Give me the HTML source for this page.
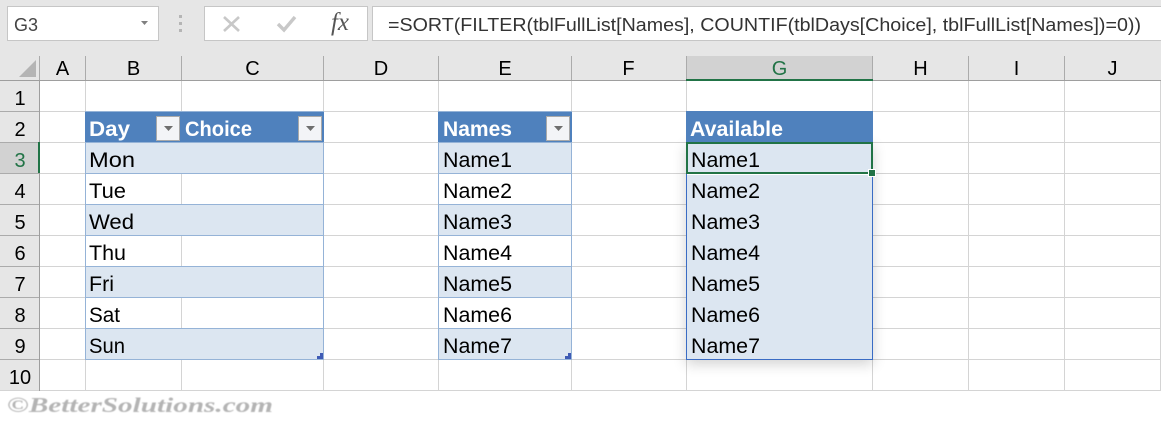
<!DOCTYPE html>
<html><head><meta charset="utf-8"><style>
html,body{margin:0;padding:0;background:#fff;width:1161px;height:425px;overflow:hidden}
svg{display:block}
text{font-family:"Liberation Sans",sans-serif}
.h{font-size:20px;fill:#000;text-anchor:middle}
.c{font-size:21px;fill:#000}
.w{font-size:21px;fill:#fff;font-weight:bold}
</style></head><body>
<svg width="1161" height="425" viewBox="0 0 1161 425" xmlns="http://www.w3.org/2000/svg" shape-rendering="crispEdges">
<defs><filter id="s" x="-20%" y="-20%" width="140%" height="140%"><feGaussianBlur stdDeviation="7"/></filter><filter id="b"><feGaussianBlur stdDeviation="0.6"/></filter></defs>
<rect width="1161" height="391" fill="#fff"/>
<rect width="1161" height="56" fill="#e6e6e6"/>
<rect x="0" y="56" width="1161" height="25" fill="#e6e6e6"/>
<rect x="0" y="56" width="39" height="335" fill="#e6e6e6"/>
<!-- formula bar -->
<rect x="7.5" y="6.5" width="151" height="34" fill="#fff" stroke="#c6c6c6"/>
<rect x="204.5" y="6.5" width="163" height="34" fill="#fff" stroke="#c6c6c6"/>
<rect x="372.5" y="6.5" width="790" height="34" fill="#fff" stroke="#c6c6c6"/>
<text x="14" y="31" style="font-size:18px" fill="#444">G3</text>
<path d="M141 21h7l-3.500 4z" fill="#808080" shape-rendering="auto"/>
<rect x="179" y="15" width="3" height="3" fill="#b5b5b5"/><rect x="179" y="22" width="3" height="3" fill="#b5b5b5"/><rect x="179" y="29" width="3" height="3" fill="#b5b5b5"/>
<path d="M224 17L239 31M239 17L224 31" stroke="#c8c8c8" stroke-width="2.600" fill="none" shape-rendering="auto"/>
<path d="M278 24L284 30L295 17" stroke="#c8c8c8" stroke-width="3.400" fill="none" shape-rendering="auto"/>
<text x="331" y="30" style="font-family:'Liberation Serif',serif;font-size:25px;font-style:italic" fill="#555" textLength="18" lengthAdjust="spacingAndGlyphs">fx</text>
<text x="388" y="31" style="font-size:18.500px" fill="#333" textLength="753" lengthAdjust="spacingAndGlyphs">=SORT(FILTER(tblFullList[Names], COUNTIF(tblDays[Choice], tblFullList[Names])=0))</text>
<!-- selected headers -->
<rect x="686" y="56" width="186" height="24" fill="#d2d2d2"/>
<rect x="0" y="142" width="39" height="31" fill="#d2d2d2"/>
<!-- corner -->
<path d="M19 77L36 60V77Z" fill="#b4b4b4" shape-rendering="auto"/>
<!-- grid -->
<g fill="#d4d4d4">
<rect x="40" y="111" width="1121" height="1"/><rect x="40" y="142" width="1121" height="1"/><rect x="40" y="173" width="1121" height="1"/><rect x="40" y="204" width="1121" height="1"/><rect x="40" y="235" width="1121" height="1"/><rect x="40" y="266" width="1121" height="1"/><rect x="40" y="297" width="1121" height="1"/><rect x="40" y="328" width="1121" height="1"/><rect x="40" y="359" width="1121" height="1"/><rect x="0" y="390" width="1161" height="1"/>
<rect x="85" y="81" width="1" height="310"/><rect x="181" y="81" width="1" height="310"/><rect x="323" y="81" width="1" height="310"/><rect x="438" y="81" width="1" height="310"/><rect x="571" y="81" width="1" height="310"/><rect x="686" y="81" width="1" height="310"/><rect x="872" y="81" width="1" height="310"/><rect x="968" y="81" width="1" height="310"/><rect x="1064" y="81" width="1" height="310"/><rect x="1160" y="81" width="1" height="310"/>
</g>
<!-- header separators -->
<g fill="#ababab">
<rect x="39" y="56" width="1" height="24"/><rect x="85" y="56" width="1" height="24"/><rect x="181" y="56" width="1" height="24"/><rect x="323" y="56" width="1" height="24"/><rect x="438" y="56" width="1" height="24"/><rect x="571" y="56" width="1" height="24"/><rect x="686" y="56" width="1" height="24"/><rect x="872" y="56" width="1" height="24"/><rect x="968" y="56" width="1" height="24"/><rect x="1064" y="56" width="1" height="24"/>
<rect x="0" y="111" width="39" height="1"/><rect x="0" y="142" width="39" height="1"/><rect x="0" y="173" width="39" height="1"/><rect x="0" y="204" width="39" height="1"/><rect x="0" y="235" width="39" height="1"/><rect x="0" y="266" width="39" height="1"/><rect x="0" y="297" width="39" height="1"/><rect x="0" y="328" width="39" height="1"/><rect x="0" y="359" width="39" height="1"/>
</g>
<rect x="0" y="80" width="1161" height="1" fill="#9e9e9e"/>
<rect x="39" y="81" width="1" height="310" fill="#9e9e9e"/>
<rect x="686" y="79" width="187" height="2" fill="#217346"/>
<rect x="38" y="142" width="2" height="31" fill="#217346"/>
<!-- column letters -->
<text class="h" x="62.500" y="75">A</text><text class="h" x="133.500" y="75">B</text><text class="h" x="252.500" y="75">C</text><text class="h" x="381" y="75">D</text><text class="h" x="505" y="75">E</text><text class="h" x="628.500" y="75">F</text><text class="h" x="779.500" y="75" style="fill:#217346">G</text><text class="h" x="920.500" y="75">H</text><text class="h" x="1016.500" y="75">I</text><text class="h" x="1112.500" y="75">J</text>
<!-- row numbers -->
<text class="h" x="20" y="105">1</text><text class="h" x="20" y="136">2</text><text class="h" x="20" y="167" style="fill:#217346">3</text><text class="h" x="20" y="198">4</text><text class="h" x="20" y="229">5</text><text class="h" x="20" y="260">6</text><text class="h" x="20" y="291">7</text><text class="h" x="20" y="322">8</text><text class="h" x="20" y="353">9</text><text class="h" x="20" y="384">10</text>
<!-- table 1 -->
<rect x="85" y="111" width="239" height="32" fill="#4f81bd"/>
<rect x="85" y="143" width="239" height="31" fill="#dce6f1"/>
<rect x="85" y="205" width="239" height="31" fill="#dce6f1"/>
<rect x="85" y="267" width="239" height="31" fill="#dce6f1"/>
<rect x="85" y="329" width="239" height="31" fill="#dce6f1"/>
<g fill="#95b3d7">
<rect x="85" y="142" width="239" height="1"/><rect x="85" y="173" width="239" height="1"/><rect x="85" y="204" width="239" height="1"/><rect x="85" y="235" width="239" height="1"/><rect x="85" y="266" width="239" height="1"/><rect x="85" y="297" width="239" height="1"/><rect x="85" y="328" width="239" height="1"/><rect x="85" y="359" width="239" height="1"/>
<rect x="85" y="143" width="1" height="217"/><rect x="323" y="143" width="1" height="217"/><rect x="85" y="111" width="239" height="1"/>
</g>
<rect x="181" y="174" width="1" height="30" fill="#d4d4d4"/><rect x="181" y="236" width="1" height="30" fill="#d4d4d4"/><rect x="181" y="298" width="1" height="30" fill="#d4d4d4"/>
<!-- table 2 -->
<rect x="438" y="111" width="134" height="32" fill="#4f81bd"/>
<rect x="438" y="143" width="134" height="31" fill="#dce6f1"/>
<rect x="438" y="205" width="134" height="31" fill="#dce6f1"/>
<rect x="438" y="267" width="134" height="31" fill="#dce6f1"/>
<rect x="438" y="329" width="134" height="31" fill="#dce6f1"/>
<g fill="#95b3d7">
<rect x="438" y="142" width="134" height="1"/><rect x="438" y="173" width="134" height="1"/><rect x="438" y="204" width="134" height="1"/><rect x="438" y="235" width="134" height="1"/><rect x="438" y="266" width="134" height="1"/><rect x="438" y="297" width="134" height="1"/><rect x="438" y="328" width="134" height="1"/><rect x="438" y="359" width="134" height="1"/>
<rect x="438" y="143" width="1" height="217"/><rect x="571" y="143" width="1" height="217"/><rect x="438" y="111" width="134" height="1"/>
</g>
<!-- resize handles -->
<path d="M317 359h6v-6h-3v3h-3z" fill="#3f5bb5"/>
<path d="M565 359h6v-6h-3v3h-3z" fill="#3f5bb5"/>
<!-- spill shadow -->
<rect x="686" y="146" width="187" height="218" fill="#000" opacity="0.18" filter="url(#s)" shape-rendering="auto"/>
<rect x="686" y="111" width="187" height="32" fill="#4f81bd"/>
<rect x="686.500" y="143.500" width="186" height="216" fill="#dce6f1" stroke="#3a6cc4"/>
<!-- active cell -->
<rect x="687" y="143" width="185" height="30" fill="#dce6f1" stroke="#217346" stroke-width="2"/>
<rect x="687" y="174" width="185" height="1" fill="#fff"/>
<rect x="868" y="169" width="8" height="8" fill="#fff"/>
<rect x="869" y="170" width="6" height="6" fill="#217346"/>
<!-- filter buttons -->
<g>
<rect x="156.500" y="116.500" width="23" height="24" fill="#f3f4f7" stroke="#a9a9a9"/>
<rect x="298.500" y="116.500" width="23" height="24" fill="#f3f4f7" stroke="#a9a9a9"/>
<rect x="546.500" y="116.500" width="23" height="24" fill="#f3f4f7" stroke="#a9a9a9"/>
<path d="M164 126h9l-4.500 5z" fill="#6e6e6e" shape-rendering="auto"/>
<path d="M306 126h9l-4.500 5z" fill="#6e6e6e" shape-rendering="auto"/>
<path d="M554 126h9l-4.500 5z" fill="#6e6e6e" shape-rendering="auto"/>
</g>
<!-- table text -->
<text class="w" x="89" y="136" textLength="41" lengthAdjust="spacingAndGlyphs">Day</text>
<text class="w" x="185" y="136" textLength="67" lengthAdjust="spacingAndGlyphs">Choice</text>
<text class="w" x="443" y="136" textLength="69" lengthAdjust="spacingAndGlyphs">Names</text>
<text class="w" x="690" y="136" textLength="93" lengthAdjust="spacingAndGlyphs">Available</text>
<text class="c" x="89" y="167" textLength="46" lengthAdjust="spacingAndGlyphs">Mon</text><text class="c" x="89" y="198" textLength="37" lengthAdjust="spacingAndGlyphs">Tue</text><text class="c" x="89" y="229" textLength="45" lengthAdjust="spacingAndGlyphs">Wed</text><text class="c" x="89" y="260" textLength="37" lengthAdjust="spacingAndGlyphs">Thu</text><text class="c" x="89" y="291" textLength="25" lengthAdjust="spacingAndGlyphs">Fri</text><text class="c" x="89" y="322" textLength="31" lengthAdjust="spacingAndGlyphs">Sat</text><text class="c" x="89" y="353" textLength="36" lengthAdjust="spacingAndGlyphs">Sun</text>
<text class="c" x="443" y="167" textLength="69" lengthAdjust="spacingAndGlyphs">Name1</text><text class="c" x="443" y="198" textLength="69" lengthAdjust="spacingAndGlyphs">Name2</text><text class="c" x="443" y="229" textLength="69" lengthAdjust="spacingAndGlyphs">Name3</text><text class="c" x="443" y="260" textLength="69" lengthAdjust="spacingAndGlyphs">Name4</text><text class="c" x="443" y="291" textLength="69" lengthAdjust="spacingAndGlyphs">Name5</text><text class="c" x="443" y="322" textLength="69" lengthAdjust="spacingAndGlyphs">Name6</text><text class="c" x="443" y="353" textLength="69" lengthAdjust="spacingAndGlyphs">Name7</text>
<text class="c" x="691" y="167" textLength="69" lengthAdjust="spacingAndGlyphs">Name1</text><text class="c" x="691" y="198" textLength="69" lengthAdjust="spacingAndGlyphs">Name2</text><text class="c" x="691" y="229" textLength="69" lengthAdjust="spacingAndGlyphs">Name3</text><text class="c" x="691" y="260" textLength="69" lengthAdjust="spacingAndGlyphs">Name4</text><text class="c" x="691" y="291" textLength="69" lengthAdjust="spacingAndGlyphs">Name5</text><text class="c" x="691" y="322" textLength="69" lengthAdjust="spacingAndGlyphs">Name6</text><text class="c" x="691" y="353" textLength="69" lengthAdjust="spacingAndGlyphs">Name7</text>
<!-- watermark -->
<text x="7" y="412" textLength="266" lengthAdjust="spacingAndGlyphs" filter="url(#b)" style="font-family:'Liberation Serif',serif;font-size:21px;font-style:italic;font-weight:bold" fill="#b4b4b4">©BetterSolutions.com</text>
</svg>
</body></html>
